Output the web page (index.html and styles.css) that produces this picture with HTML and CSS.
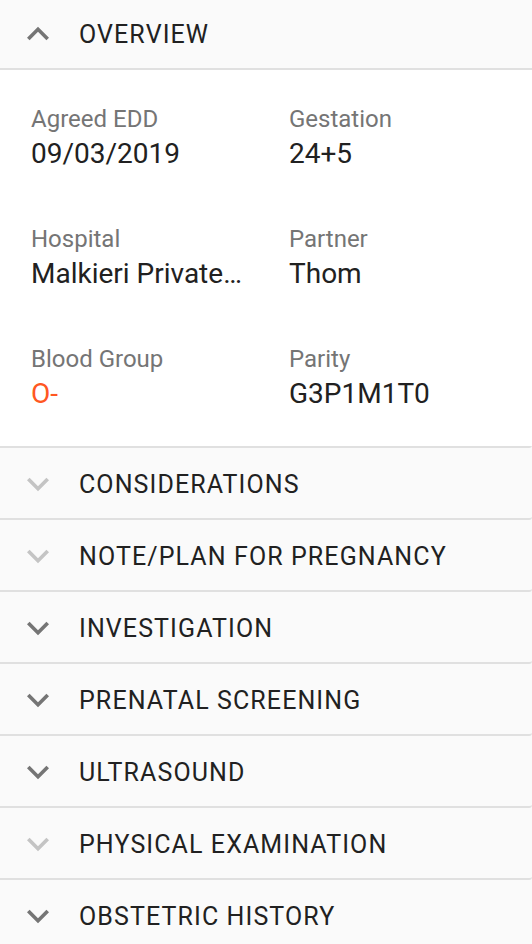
FILE: index.html
```html
<!DOCTYPE html>
<html lang="en">
<head>
    <meta charset="UTF-8">
    <meta name="viewport" content="width=device-width, initial-scale=1.0">
    <title>Pregnancy Summary</title>
    <link rel="stylesheet" href="styles.css">
</head>
<body>
    <div class="panel open">
        <div class="panel-header">
            <svg class="chevron" viewBox="0 0 24 24"><path d="M12 8l-6 6 1.41 1.41L12 10.83l4.59 4.58L18 14z"/></svg>
            <span class="panel-title">OVERVIEW</span>
        </div>
        <div class="panel-body">
            <div class="field">
                <div class="label">Agreed EDD</div>
                <div class="value">09/03/2019</div>
            </div>
            <div class="field">
                <div class="label">Gestation</div>
                <div class="value">24+5</div>
            </div>
            <div class="field">
                <div class="label">Hospital</div>
                <div class="value">Malkieri Private Hospital</div>
            </div>
            <div class="field">
                <div class="label">Partner</div>
                <div class="value">Thom</div>
            </div>
            <div class="field">
                <div class="label">Blood Group</div>
                <div class="value alert">O-</div>
            </div>
            <div class="field">
                <div class="label">Parity</div>
                <div class="value">G3P1M1T0</div>
            </div>
        </div>
    </div>

    <div class="panel">
        <div class="panel-header disabled">
            <svg class="chevron" viewBox="0 0 24 24"><path d="M16.59 8.59L12 13.17 7.41 8.59 6 10l6 6 6-6z"/></svg>
            <span class="panel-title">CONSIDERATIONS</span>
        </div>
    </div>
    <div class="panel">
        <div class="panel-header disabled">
            <svg class="chevron" viewBox="0 0 24 24"><path d="M16.59 8.59L12 13.17 7.41 8.59 6 10l6 6 6-6z"/></svg>
            <span class="panel-title">NOTE/PLAN FOR PREGNANCY</span>
        </div>
    </div>
    <div class="panel">
        <div class="panel-header">
            <svg class="chevron" viewBox="0 0 24 24"><path d="M16.59 8.59L12 13.17 7.41 8.59 6 10l6 6 6-6z"/></svg>
            <span class="panel-title">INVESTIGATION</span>
        </div>
    </div>
    <div class="panel">
        <div class="panel-header">
            <svg class="chevron" viewBox="0 0 24 24"><path d="M16.59 8.59L12 13.17 7.41 8.59 6 10l6 6 6-6z"/></svg>
            <span class="panel-title">PRENATAL SCREENING</span>
        </div>
    </div>
    <div class="panel">
        <div class="panel-header">
            <svg class="chevron" viewBox="0 0 24 24"><path d="M16.59 8.59L12 13.17 7.41 8.59 6 10l6 6 6-6z"/></svg>
            <span class="panel-title">ULTRASOUND</span>
        </div>
    </div>
    <div class="panel">
        <div class="panel-header disabled">
            <svg class="chevron" viewBox="0 0 24 24"><path d="M16.59 8.59L12 13.17 7.41 8.59 6 10l6 6 6-6z"/></svg>
            <span class="panel-title">PHYSICAL EXAMINATION</span>
        </div>
    </div>
    <div class="panel">
        <div class="panel-header">
            <svg class="chevron" viewBox="0 0 24 24"><path d="M16.59 8.59L12 13.17 7.41 8.59 6 10l6 6 6-6z"/></svg>
            <span class="panel-title">OBSTETRIC HISTORY</span>
        </div>
    </div>
</body>
</html>
```

FILE: styles.css
```css
body {
    margin: 0;
    font-family: Roboto, "Liberation Sans", sans-serif;
    background-color: #fafafa;
    color: #212121;
}
.panel {
    border-bottom: 2px solid #e0e0e0;
    border-bottom-right-radius: 3px;
    background-color: #fafafa;
}
.panel-header {
    display: flex;
    align-items: center;
    height: 70px;
    padding-left: 16px;
    padding-top: 2px;
    box-sizing: border-box;
}
.open .panel-header {
    height: 70px;
    padding-top: 0;
    border-bottom: 2px solid #e0e0e0;
}
.chevron {
    width: 44px;
    height: 44px;
    fill: #757575;
    flex-shrink: 0;
}
.disabled .chevron {
    fill: #c4c4c4;
}
.panel-title {
    margin-left: 19px;
    font-size: 25px;
    letter-spacing: 1.1px;
    color: #212121;
}
.panel-body {
    display: grid;
    grid-template-columns: 258px 1fr;
    row-gap: 50px;
    padding: 36px 0 30px 31px;
    background-color: white;
}
.field {
    min-width: 0;
    padding-right: 45px;
}
.label {
    font-size: 24px;
    line-height: 26px;
    color: #757575;
}
.value {
    font-size: 28px;
    line-height: 44px;
    white-space: nowrap;
    overflow: hidden;
    text-overflow: ellipsis;
}
.alert {
    color: #ff5722;
}
```
